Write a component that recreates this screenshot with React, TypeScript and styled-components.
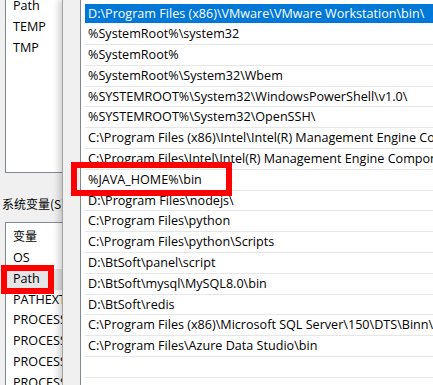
import React from "react";
import styled, { createGlobalStyle } from "styled-components";

const Global = createGlobalStyle`
  html, body { margin: 0; padding: 0; }
  body {
    width: 433px;
    height: 385px;
    overflow: hidden;
    background: #f0f0f0;
    font-family: "Open Sans", "Noto Sans CJK SC", sans-serif;
    font-size: 12.6px;
    color: #000;
  }
  #root { width: 433px; height: 385px; }
`;

const Screen = styled.div`
  position: relative;
  display: flex;
  width: 433px;
  height: 385px;
  overflow: hidden;
  background: #f0f0f0;
`;

const BackWindow = styled.div`
  width: 62px;
  flex: none;
  display: flex;
  flex-direction: column;
  overflow: hidden;
  background: #f0f0f0;
`;

const UserList = styled.div`
  margin-left: 5px;
  height: 172px;
  width: 80px;
  flex: none;
  background: #fff;
  border-left: 1px solid #828790;
  border-bottom: 1px solid #828790;
  overflow: hidden;
`;

const UserRows = styled.div`
  margin-top: -4px;
`;

const LeftRow = styled.div<{ $selected?: boolean; $header?: boolean }>`
  height: ${(p) => (p.$header ? "25px" : "20.8px")};
  line-height: ${(p) => (p.$header ? "25px" : "20.8px")};
  padding-left: 7px;
  white-space: nowrap;
  background: ${(p) => (p.$selected ? "#e5e5e5" : "transparent")};
`;

const GroupLabel = styled.div`
  margin-top: 22px;
  padding-left: 2px;
  height: 18px;
  line-height: 18px;
  white-space: nowrap;
  font-family: "Noto Sans CJK SC", "Open Sans", sans-serif;
  font-size: 12px;
`;

const SysList = styled.div`
  margin-top: 9px;
  margin-left: 5px;
  flex: 1;
  width: 80px;
  background: #fff;
  border-left: 1px solid #828790;
  border-top: 1px solid #828790;
  overflow: hidden;
`;

const HeaderText = styled.span`
  font-family: "Noto Sans CJK SC", sans-serif;
  font-size: 12px;
`;

const FrontWindow = styled.div`
  position: relative;
  z-index: 1;
  flex: 1;
  display: flex;
  background: #f0f0f0;
  border-left: 1px solid #a3a3a3;
  box-shadow: -3px 0 7px rgba(0, 0, 0, 0.2);
  padding-left: 17px;
  min-width: 0;
`;

const PathList = styled.div`
  flex: 1;
  background: #fff;
  border-left: 1px solid #828790;
  padding-top: 3.5px;
  padding-left: 4px;
  overflow: hidden;
  min-width: 0;
`;

const PathRow = styled.div<{ $selected?: boolean }>`
  height: 20.8px;
  line-height: 20px;
  box-sizing: border-box;
  padding-left: 3px;
  white-space: nowrap;
  border-bottom: 1px solid ${(p) => (p.$selected ? "#fff" : "#e6e6e6")};
  background: ${(p) => (p.$selected ? "#0078d7" : "#fff")};
  color: ${(p) => (p.$selected ? "#fff" : "#000")};
`;

const Highlight = styled.div<{ $x: number; $y: number; $w: number; $h: number }>`
  position: absolute;
  z-index: 5;
  left: ${(p) => p.$x}px;
  top: ${(p) => p.$y}px;
  width: ${(p) => p.$w}px;
  height: ${(p) => p.$h}px;
  box-sizing: border-box;
  border: 6px solid #ff0000;
  pointer-events: none;
`;

const userVars = ["Path", "TEMP", "TMP"];
const sysVars = [
  "OS",
  "Path",
  "PATHEXT",
  "PROCESSOR_ARCHITECTURE",
  "PROCESSOR_IDENTIFIER",
  "PROCESSOR_LEVEL",
  "PROCESSOR_REVISION",
];

const paths = [
  "D:\\Program Files (x86)\\VMware\\VMware Workstation\\bin\\",
  "%SystemRoot%\\system32",
  "%SystemRoot%",
  "%SystemRoot%\\System32\\Wbem",
  "%SYSTEMROOT%\\System32\\WindowsPowerShell\\v1.0\\",
  "%SYSTEMROOT%\\System32\\OpenSSH\\",
  "C:\\Program Files (x86)\\Intel\\Intel(R) Management Engine Components\\DAL",
  "C:\\Program Files\\Intel\\Intel(R) Management Engine Components\\DAL",
  "%JAVA_HOME%\\bin",
  "D:\\Program Files\\nodejs\\",
  "C:\\Program Files\\python",
  "C:\\Program Files\\python\\Scripts",
  "D:\\BtSoft\\panel\\script",
  "D:\\BtSoft\\mysql\\MySQL8.0\\bin",
  "D:\\BtSoft\\redis",
  "C:\\Program Files (x86)\\Microsoft SQL Server\\150\\DTS\\Binn\\",
  "C:\\Program Files\\Azure Data Studio\\bin",
  "",
  "",
];

export default function App() {
  return (
    <>
      <Global />
      <Screen>
        <BackWindow>
          <UserList>
            <UserRows>
              {userVars.map((v) => (
                <LeftRow key={v}>{v}</LeftRow>
              ))}
            </UserRows>
          </UserList>
          <GroupLabel>系统变量(S)</GroupLabel>
          <SysList>
            <LeftRow $header>
              <HeaderText>变量</HeaderText>
            </LeftRow>
            {sysVars.map((v) => (
              <LeftRow key={v} $selected={v === "Path"}>
                {v}
              </LeftRow>
            ))}
          </SysList>
        </BackWindow>
        <FrontWindow>
          <PathList>
            {paths.map((p, i) => (
              <PathRow key={i} $selected={i === 0}>
                {p || "\u00a0"}
              </PathRow>
            ))}
          </PathList>
        </FrontWindow>
        <Highlight $x={71} $y={162} $w={161} $h={34} />
        <Highlight $x={1} $y={265} $w={53} $h={29} />
      </Screen>
    </>
  );
}
